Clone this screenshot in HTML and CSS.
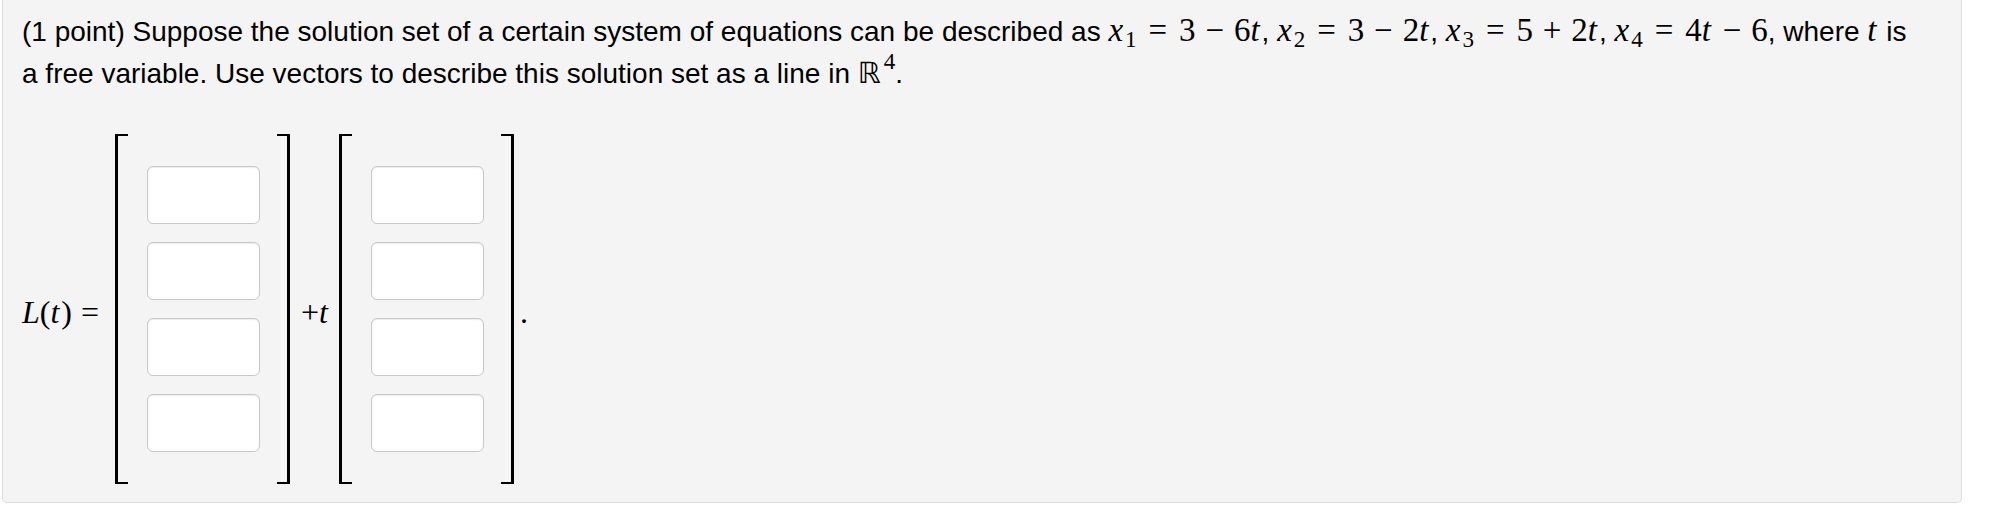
FILE: index.html
```html
<!DOCTYPE html>
<html lang="en">
<head>
<meta charset="utf-8">
<title>Problem</title>
<link rel="stylesheet" href="styles.css">
</head>
<body>
<div class="problem">
  <p class="stmt">(1 point) Suppose the solution set of a certain system of equations can be described as <span class="m"><i class="vx">x</i><sub>1</sub><span class="r">=</span>3<span class="b">−</span>6<i class="vt">t</i></span>, <span class="m"><i class="vx">x</i><sub>2</sub><span class="r">=</span>3<span class="b">−</span>2<i class="vt">t</i></span>, <span class="m"><i class="vx">x</i><sub>3</sub><span class="r">=</span>5<span class="b">+</span>2<i class="vt">t</i></span>, <span class="m"><i class="vx">x</i><sub>4</sub><span class="r">=</span>4<i class="vt">t</i><span class="b">−</span>6</span>, where <span class="m"><i class="vt">t</i></span> is<br>a free variable. Use vectors to describe this solution set as a line in <span class="bb">ℝ</span><sup class="m4">4</sup>.</p>
  <div class="eq">
    <span class="lhs"><i>L</i>(<i class="vt">t</i>)<span class="r">=</span></span>
    <div class="vec">
      <span class="lb"></span>
      <div class="col">
        <input class="ans" type="text">
        <input class="ans" type="text">
        <input class="ans" type="text">
        <input class="ans" type="text">
      </div>
      <span class="rb"></span>
    </div>
    <span class="plus">+<i>t</i></span>
    <div class="vec">
      <span class="lb"></span>
      <div class="col">
        <input class="ans" type="text">
        <input class="ans" type="text">
        <input class="ans" type="text">
        <input class="ans" type="text">
      </div>
      <span class="rb"></span>
    </div>
    <span class="dot">.</span>
  </div>
</div>
</body>
</html>
```
FILE: styles.css
```css
html, body {
  margin: 0;
  padding: 0;
  background: #ffffff;
}

body {
  font-family: "Liberation Sans", Arial, sans-serif;
  color: #000;
}

.problem {
  box-sizing: border-box;
  width: 1960px;
  margin-left: 2px;
  background: #f4f4f4;
  border: 1px solid #dedede;
  border-top: 0;
  border-radius: 0 0 5px 5px;
  padding: 11px 20px 18px 19px;
}

.stmt {
  margin: 0;
  font-size: 28px;
  line-height: 42px;
  white-space: nowrap;
}

.m {
  font-family: "Liberation Serif", "Times New Roman", serif;
  font-size: 33px;
  line-height: 1;
}

.m sub {
  font-size: 0.7em;
  line-height: 0;
  vertical-align: -0.25em;
}

.vx {
  padding-right: 2px;
}

.vt {
  padding-right: 2px;
}

.r {
  margin: 0 0.36em;
}

.b {
  margin: 0 0.3em;
}

.bb {
  font-family: "DejaVu Sans", sans-serif;
  font-size: 29px;
  line-height: 1;
}

.m4 {
  font-family: "Liberation Serif", serif;
  font-size: 23px;
  line-height: 0;
  vertical-align: 0.6em;
  margin-left: 3px;
}

.eq {
  display: flex;
  align-items: center;
  margin-top: 39px;
  height: 350px;
  font-family: "Liberation Serif", "Times New Roman", serif;
  font-size: 32px;
}

.lhs {
  width: 93px;
  flex: none;
  padding-top: 6px;
  white-space: nowrap;
}

.lhs .r {
  margin: 0 0 0 0.28em;
}

.plus {
  width: 27px;
  margin: 0 11px;
  padding-top: 6px;
  flex: none;
  white-space: nowrap;
}

.dot {
  margin-left: 6px;
  padding-top: 6px;
}

.vec {
  display: flex;
  align-items: stretch;
  height: 350px;
  flex: none;
}

.lb, .rb {
  display: block;
  width: 10px;
  border-top: 2px solid #000;
  border-bottom: 2px solid #000;
}

.lb {
  border-left: 3px solid #000;
}

.rb {
  border-right: 3px solid #000;
}

.col {
  display: flex;
  flex-direction: column;
  justify-content: center;
  gap: 18px;
  margin: 0 17px 0 19px;
}

.ans {
  box-sizing: border-box;
  display: block;
  width: 113px;
  height: 58px;
  margin: 0;
  padding: 4px 6px;
  background: #ffffff;
  border: 1px solid #c8c8c8;
  border-radius: 6px;
  box-shadow: inset 0 1px 1px rgba(0, 0, 0, 0.075);
  font-size: 16px;
}
```
